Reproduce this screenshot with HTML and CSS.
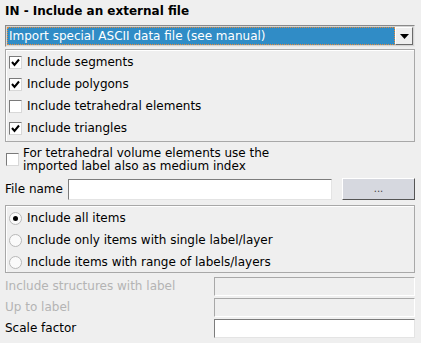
FILE: index.html
```html
<!DOCTYPE html>
<html lang="en">
<head>
  <meta charset="UTF-8">
  <title>IN - Include an external file</title>
  <link rel="stylesheet" href="styles.css">
</head>
<body>
  <div class="panel">
    <div class="title">IN - Include an external file</div>

    <div class="combo">
      <div class="combo-value">Import special ASCII data file (see manual)</div>
      <div class="combo-btn">
        <svg width="9" height="5" viewBox="0 0 9 5"><polygon points="0,0 9,0 4.5,5" fill="#000"/></svg>
      </div>
    </div>

    <div class="group group-checks">
      <div class="opt"><span class="check on"></span>Include segments</div>
      <div class="opt"><span class="check on"></span>Include polygons</div>
      <div class="opt"><span class="check"></span>Include tetrahedral elements</div>
      <div class="opt"><span class="check on"></span>Include triangles</div>
    </div>

    <div class="opt-wide"><span class="check"></span><span>For tetrahedral volume elements use the<br>imported label also as medium index</span></div>

    <div class="file-row">
      <label class="file-label">File name</label>
      <div class="field file-field"></div>
      <div class="btn">...</div>
    </div>

    <div class="group group-radios">
      <div class="opt"><span class="radio on"></span>Include all items</div>
      <div class="opt"><span class="radio"></span>Include only items with single label/layer</div>
      <div class="opt"><span class="radio"></span>Include items with range of labels/layers</div>
    </div>

    <div class="form-grid">
      <div class="grid-label disabled">Include structures with label</div>
      <div class="field disabled-field"></div>
      <div class="grid-label disabled">Up to label</div>
      <div class="field disabled-field"></div>
      <div class="grid-label">Scale factor</div>
      <div class="field"></div>
    </div>
  </div>
</body>
</html>
```

FILE: styles.css
```css
body {
  margin: 0;
  background-color: #efefef;
  font-family: 'DejaVu Sans', sans-serif;
  font-size: 12px;
  color: #000;
}

.panel {
  width: 410px;
  padding: 0 6px 0 5px;
}

.title {
  height: 23px;
  line-height: 23px;
  font-weight: bold;
}

/* combo box */
.combo {
  display: flex;
  height: 18px;
  margin-top: 2px;
  padding: 1px;
  border: 1px solid;
  border-color: #8a8a8a #e8e8e8 #e8e8e8 #8a8a8a;
  background-color: #d4d4d4;
}

.combo-value {
  flex: 1;
  background-color: #308cc6;
  color: #fff;
  line-height: 16px;
  padding-left: 1px;
  border: 1px dotted #e08a3c;
  white-space: nowrap;
  overflow: hidden;
}

.combo-btn {
  width: 16px;
  display: flex;
  align-items: center;
  justify-content: center;
  background-color: #efefef;
  border: 1px solid;
  border-color: #fff #6a6a6a #6a6a6a #fff;
}

/* group boxes */
.group {
  border: 1px solid #a8a8a8;
  box-shadow: inset 1px 1px 0 #fff;
  margin-top: 2px;
}

.group-checks {
  height: 90px;
  padding-top: 1px;
}

.group-radios {
  height: 65px;
  margin-top: 5px;
  padding-top: 1px;
}

.opt {
  display: flex;
  align-items: center;
  height: 22px;
  padding-left: 3px;
}

.check {
  width: 11px;
  height: 11px;
  margin-right: 5px;
  background-color: #fff;
  border: 1px solid;
  border-color: #7a7a7a #d8d8d8 #d8d8d8 #7a7a7a;
  flex-shrink: 0;
}

.check.on {
  background: #fff url("data:image/svg+xml;utf8,<svg xmlns='http://www.w3.org/2000/svg' width='11' height='11'><path d='M2 5 L4.5 8 L9 2.5' stroke='black' stroke-width='2' fill='none'/></svg>") no-repeat center;
}

.radio {
  width: 11px;
  height: 11px;
  margin-right: 5px;
  border-radius: 50%;
  border: 1px solid #b8b8b8;
  background-color: #fafafa;
  position: relative;
  flex-shrink: 0;
}

.radio.on::after {
  content: '';
  position: absolute;
  left: 3px;
  top: 3px;
  width: 5px;
  height: 5px;
  border-radius: 50%;
  background-color: #000;
}

.opt-wide {
  display: flex;
  align-items: center;
  height: 27px;
  margin-top: 4px;
  padding-left: 1px;
  line-height: 13px;
}

.opt-wide .check {
  margin-right: 4px;
}

/* file row */
.file-row {
  display: flex;
  align-items: center;
  height: 22px;
  margin-top: 5px;
}

.file-label {
  width: 63px;
}

.field {
  height: 17px;
  background-color: #fff;
  border: 1px solid;
  border-color: #7c7c7c #e4e4e4 #e4e4e4 #7c7c7c;
}

.file-field {
  width: 262px;
  height: 19px;
}

.btn {
  margin-left: 10px;
  flex: 1;
  height: 20px;
  line-height: 20px;
  text-align: center;
  font-size: 10px;
  color: #444;
  background-color: #d6d8df;
  border: 1px solid;
  border-color: #fff #555 #555 #fff;
}

/* bottom grid */
.form-grid {
  display: grid;
  grid-template-columns: 209px 1fr;
  row-gap: 2px;
  margin-top: 4px;
  align-items: center;
}

.grid-label {
  height: 19px;
  line-height: 19px;
}

.disabled {
  color: #b4b4b4;
}

.disabled-field {
  background-color: #efefef;
  border-color: #a8a8a8 #fff #fff #a8a8a8;
}
```
